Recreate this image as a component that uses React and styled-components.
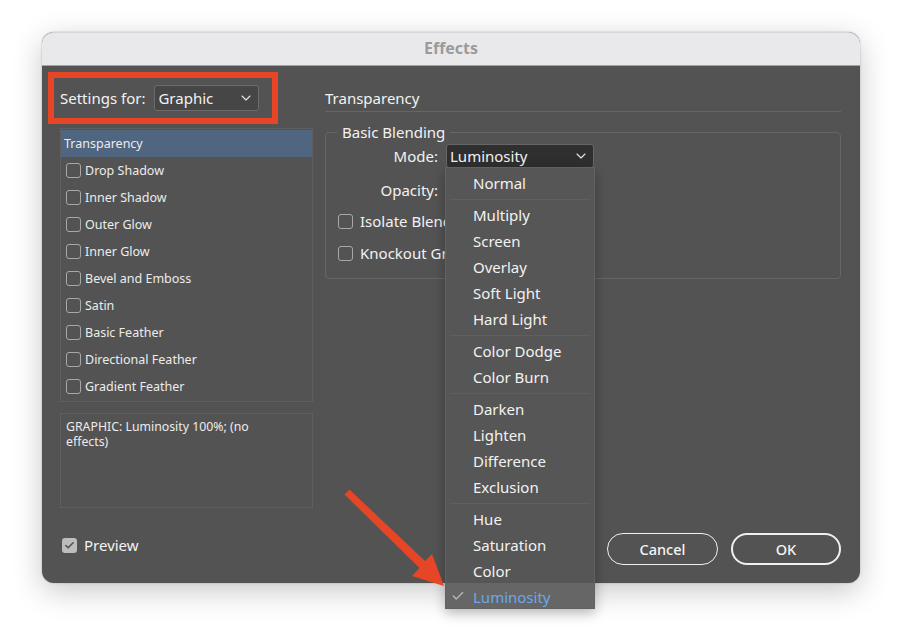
import React from 'react';
import styled, { createGlobalStyle } from 'styled-components';
import { Check, ChevronDown } from 'lucide-react';

const GlobalStyle = createGlobalStyle`
  html, body {
    margin: 0;
    background: #fff;
  }
  * {
    box-sizing: border-box;
  }
`;

const Page = styled.div`
  position: relative;
  width: 902px;
  height: 643px;
  overflow: hidden;
  padding: 32px 0 0 42px;
  font-family: "Noto Sans", sans-serif;
  color: #f2f2f2;
`;

const Window = styled.div`
  position: relative;
  width: 818px;
  height: 551px;
  border-radius: 12px;
  background: #535353;
  box-shadow: 0 8px 30px rgba(0, 0, 0, 0.22), 0 0 2px rgba(0, 0, 0, 0.25);
  display: flex;
  flex-direction: column;
`;

const TitleBar = styled.div`
  height: 34px;
  flex: none;
  border-radius: 12px 12px 0 0;
  border-top: 1px solid #d6d6d8;
  border-bottom: 1px solid #a3a3a3;
  background: #e9e9ec;
  color: #9b9b9b;
  font-size: 16px;
  font-weight: 700;
  display: flex;
  align-items: center;
  justify-content: center;
  padding-bottom: 2px;
`;

const Body = styled.div`
  flex: 1;
  display: grid;
  grid-template-columns: 253px 516px;
  column-gap: 12px;
  padding: 19px 19px 18px 18px;
`;

const LeftColumn = styled.div`
  display: flex;
  flex-direction: column;
`;

const RightColumn = styled.div`
  display: flex;
  flex-direction: column;
`;

const SettingsRow = styled.div`
  display: flex;
  align-items: center;
  gap: 9px;
  height: 26px;
  font-size: 15px;
`;

const Select = styled.div`
  position: relative;
  display: flex;
  align-items: center;
  justify-content: space-between;
  flex: none;
  width: ${(p) => p.$width}px;
  height: ${(p) => p.$height}px;
  padding: 0 4px 0 3px;
  border: 1px solid ${(p) => (p.$dark ? '#666' : '#6b6b6b')};
  border-radius: 3px;
  background: ${(p) => (p.$dark ? '#2f2f2f' : '#464646')};
  font-size: 15px;
  color: #f2f2f2;
`;

const Highlight = styled.div`
  position: absolute;
  left: 6px;
  top: 40px;
  width: 230px;
  height: 52px;
  border: 6px solid #e64526;
`;

const EffectList = styled.div`
  margin-top: 17px;
  height: 274px;
  border: 1px solid #5f5f5f;
  padding-top: 1px;
`;

const EffectRow = styled.div`
  display: flex;
  align-items: center;
  gap: 4px;
  height: 27px;
  padding-left: ${(p) => (p.$selected ? '3px' : '5px')};
  background: ${(p) => (p.$selected ? '#4f6580' : 'transparent')};
  font-size: 12.5px;
  color: #ececec;
`;

const Checkbox = styled.span`
  flex: none;
  width: 15px;
  height: 15px;
  border: 1px solid #a8a8a8;
  border-radius: 3px;
`;

const CheckedBox = styled.span`
  flex: none;
  width: 15px;
  height: 15px;
  border-radius: 3px;
  background: #bdbdbd;
  color: #535353;
  display: flex;
  align-items: center;
  justify-content: center;
`;

const Summary = styled.div`
  margin-top: 11px;
  height: 95px;
  border: 1px solid #5f5f5f;
  padding: 5px 40px 5px 5px;
  font-size: 12.3px;
  line-height: 15px;
  color: #ececec;
`;

const PreviewRow = styled.div`
  margin-top: 29px;
  margin-left: 2px;
  display: flex;
  align-items: center;
  gap: 7px;
  height: 16px;
  font-size: 15px;
`;

const SectionTitle = styled.div`
  height: 27px;
  display: flex;
  align-items: center;
  border-bottom: 1px solid #666;
  font-size: 15px;
`;

const Group = styled.fieldset`
  margin: 11px 0 0;
  padding: 3px 12px 0;
  height: 156px;
  border: 1px solid #666;
  border-radius: 4px;
`;

const GroupLegend = styled.legend`
  margin-left: -1px;
  padding: 0 5px;
  height: 18px;
  line-height: 18px;
  font-size: 15px;
`;

const FieldRow = styled.div`
  display: flex;
  align-items: center;
  gap: 8px;
  height: ${(p) => p.$height}px;
  margin-top: ${(p) => p.$top || 0}px;
  font-size: 15px;
`;

const FieldLabel = styled.span`
  width: 100px;
  text-align: right;
`;

const CheckRow = styled.div`
  display: flex;
  align-items: center;
  gap: 7px;
  height: 32px;
  margin-top: ${(p) => p.$top || 0}px;
  font-size: 15px;
  white-space: nowrap;
`;

const Menu = styled.div`
  position: absolute;
  z-index: 2;
  left: -2px;
  top: 22px;
  width: 150px;
  height: 442px;
  padding-top: 2px;
  background: #565656;
  border: 1px solid #626262;
  box-shadow: 0 4px 12px rgba(0, 0, 0, 0.28);
`;

const MenuItem = styled.div`
  position: relative;
  height: ${(p) => (p.$active ? 25 : 26)}px;
  margin-top: ${(p) => (p.$active ? -1 : 0)}px;
  padding: ${(p) => (p.$active ? '3px 0 0 27px' : '0 0 0 27px')};
  display: flex;
  align-items: center;
  font-size: 15px;
  color: ${(p) => (p.$active ? '#6aa9ea' : '#f2f2f2')};
  background: ${(p) => (p.$active ? '#666' : 'transparent')};
`;

const MenuCheck = styled.span`
  position: absolute;
  left: 5px;
  top: 6px;
  color: #b5b5b5;
  display: flex;
`;

const MenuSeparator = styled.div`
  height: 6px;
  margin: 0 4px;
  background: linear-gradient(#5f5f5f, #5f5f5f) center / 100% 1px no-repeat;
`;

const Footer = styled.div`
  margin-top: auto;
  display: flex;
  justify-content: flex-end;
  gap: 13px;
`;

const Button = styled.div`
  width: ${(p) => (p.$primary ? 110 : 111)}px;
  height: 32px;
  border: ${(p) => (p.$primary ? 2.5 : 1)}px solid #f0f0f0;
  border-radius: 16px;
  display: flex;
  align-items: center;
  justify-content: center;
  font-size: 14.5px;
  font-weight: 500;
  color: #f5f5f5;
`;

const Arrow = styled.svg`
  position: absolute;
  z-index: 3;
  left: 0;
  top: 0;
  pointer-events: none;
`;

const effects = [
  'Drop Shadow',
  'Inner Shadow',
  'Outer Glow',
  'Inner Glow',
  'Bevel and Emboss',
  'Satin',
  'Basic Feather',
  'Directional Feather',
  'Gradient Feather',
];

const blendGroups = [
  ['Normal'],
  ['Multiply', 'Screen', 'Overlay', 'Soft Light', 'Hard Light'],
  ['Color Dodge', 'Color Burn'],
  ['Darken', 'Lighten', 'Difference', 'Exclusion'],
  ['Hue', 'Saturation', 'Color', 'Luminosity'],
];

const Chevron = () => <ChevronDown size={16} strokeWidth={1.6} color="#e8e8e8" />;

const App = () => {
  return (
    <Page>
      <GlobalStyle />
      <Window>
        <TitleBar>Effects</TitleBar>
        <Body>
          <LeftColumn>
            <SettingsRow>
              Settings for:
              <Select $width={105} $height={26}>
                Graphic
                <Chevron />
              </Select>
            </SettingsRow>
            <EffectList>
              <EffectRow $selected>Transparency</EffectRow>
              {effects.map((name) => (
                <EffectRow key={name}>
                  <Checkbox />
                  {name}
                </EffectRow>
              ))}
            </EffectList>
            <Summary>GRAPHIC: Luminosity 100%; (no effects)</Summary>
            <PreviewRow>
              <CheckedBox>
                <Check size={11} strokeWidth={3.5} />
              </CheckedBox>
              Preview
            </PreviewRow>
          </LeftColumn>
          <RightColumn>
            <SectionTitle>Transparency</SectionTitle>
            <Group>
              <GroupLegend>Basic Blending</GroupLegend>
              <FieldRow $height={24}>
                <FieldLabel>Mode:</FieldLabel>
                <Select $width={148} $height={24} $dark>
                  Luminosity
                  <Chevron />
                  <Menu>
                    {blendGroups.map((group, i) => (
                      <React.Fragment key={group[0]}>
                        {i > 0 && <MenuSeparator />}
                        {group.map((name) => (
                          <MenuItem key={name} $active={name === 'Luminosity'}>
                            {name === 'Luminosity' && (
                              <MenuCheck>
                                <Check size={14} strokeWidth={2.5} />
                              </MenuCheck>
                            )}
                            {name}
                          </MenuItem>
                        ))}
                      </React.Fragment>
                    ))}
                  </Menu>
                </Select>
              </FieldRow>
              <FieldRow $height={18} $top={13}>
                <FieldLabel>Opacity:</FieldLabel>
              </FieldRow>
              <CheckRow $top={6}>
                <Checkbox />
                Isolate Blending
              </CheckRow>
              <CheckRow>
                <Checkbox />
                Knockout Group
              </CheckRow>
            </Group>
            <Footer>
              <Button>Cancel</Button>
              <Button $primary>OK</Button>
            </Footer>
          </RightColumn>
        </Body>
        <Highlight />
      </Window>
      <Arrow width="902" height="643" viewBox="0 0 902 643">
        <path d="M344.5 494.5 L349.5 489.5 L425 561 L432 554 L444 586 L412 576 L419.5 568 Z" fill="#e64526" />
      </Arrow>
    </Page>
  );
};

export default App;
